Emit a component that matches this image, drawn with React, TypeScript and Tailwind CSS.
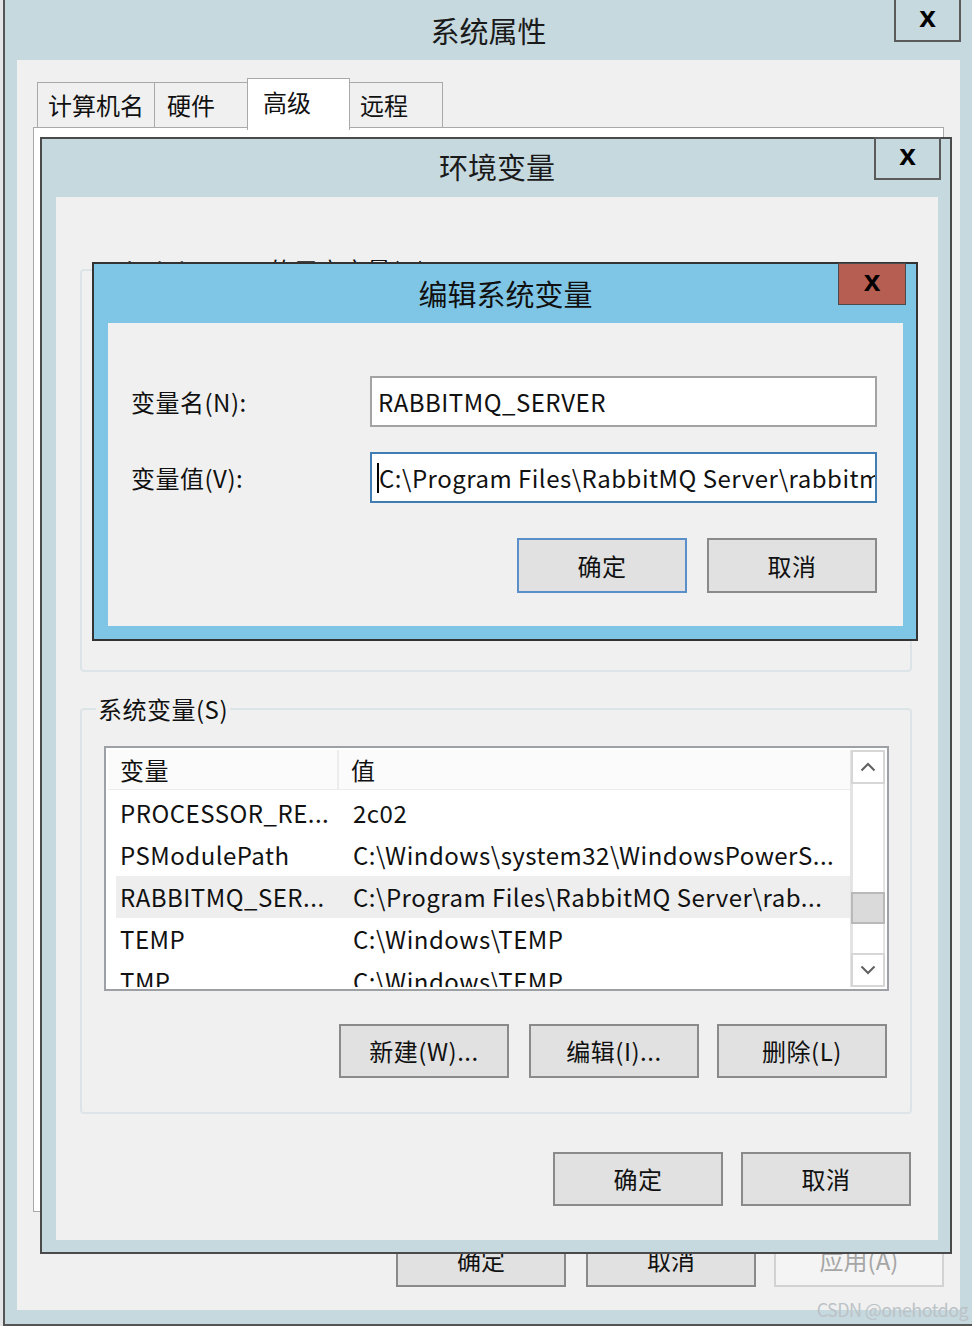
import clsx from "clsx";

const rows = [
  { name: "PROCESSOR_RE...", value: "2c02" },
  { name: "PSModulePath", value: "C:\\Windows\\system32\\WindowsPowerS..." },
  { name: "RABBITMQ_SER...", value: "C:\\Program Files\\RabbitMQ Server\\rab...", selected: true },
  { name: "TEMP", value: "C:\\Windows\\TEMP" },
  { name: "TMP", value: "C:\\Windows\\TEMP" },
];

function CloseX({ className }: { className: string }) {
  return (
    <div
      className={clsx(
        "absolute flex items-center justify-center font-['Liberation_Sans',sans-serif] text-[30px] font-bold leading-none tracking-normal text-black",
        className,
      )}
    >
      <span className="-mt-[7px]">x</span>
    </div>
  );
}

function Btn({
  label,
  primary,
  disabled,
  className,
}: {
  label: string;
  primary?: boolean;
  disabled?: boolean;
  className?: string;
}) {
  return (
    <div
      className={clsx(
        "flex w-[170px] shrink-0 items-center justify-center border-2 text-[24px] leading-none",
        primary && "border-[#5b8fc9] bg-[#e1e1e1]",
        disabled && "border-[#d2d2d2] bg-[#f4f4f4] text-[#a6a6a6]",
        !primary && !disabled && "border-[#8a8a8a] bg-[#e1e1e1]",
        className,
      )}
    >
      {label}
    </div>
  );
}

function SystemProperties() {
  return (
    <div className="absolute left-[3px] top-[-2px] flex h-[1328px] w-[974px] flex-col border-2 border-[#555] bg-[#c6d9df] pb-[14px] pl-[12px] pr-[15px]">
      <div className="flex h-[60px] shrink-0 items-center justify-center text-[29px] leading-none text-[#1a1a1a]">
        系统属性
      </div>
      <CloseX className="right-[14px] top-[-2px] h-[44px] w-[67px] border-2 border-[#5a5a5a]" />

      <div className="flex flex-1 flex-col bg-[#f0f0f0] pl-[16px] pr-[16px] pt-[18px]">
        <div className="relative z-10 flex h-[49px] items-start pl-[4px] text-[24px] leading-none">
          <div className="mt-[4px] flex h-[45px] w-[118px] items-center border border-b-0 border-[#a9a9a9] bg-[#f0f0f0] pl-[10px]">
            计算机名
          </div>
          <div className="-ml-px mt-[4px] flex h-[45px] w-[94px] items-center border border-b-0 border-[#a9a9a9] bg-[#f0f0f0] pl-[12px]">
            硬件
          </div>
          <div className="-ml-px flex h-[52px] w-[103px] items-start border border-b-0 border-[#a9a9a9] bg-white pl-[15px] pt-[11px]">
            高级
          </div>
          <div className="-ml-px mt-[4px] flex h-[45px] w-[94px] items-center border border-b-0 border-[#a9a9a9] bg-[#f0f0f0] pl-[10px]">
            远程
          </div>
        </div>
        <div className="h-[1085px] border border-[#a9a9a9] bg-white" />
        <div className="mt-[20px] flex justify-end">
          <Btn label="确定" className="h-[55px]" />
          <Btn label="取消" className="ml-[20px] h-[55px]" />
          <Btn label="应用(A)" disabled className="ml-[18px] h-[55px]" />
        </div>
      </div>
    </div>
  );
}

function ScrollBar() {
  return (
    <div className="flex w-[35px] flex-col border-l border-[#e3e3e3] bg-white">
      <div className="flex h-[34px] items-center justify-center border-2 border-[#d6d6d6]">
        <svg width="16" height="10" viewBox="0 0 16 10">
          <polyline points="1.5,8.5 8,2 14.5,8.5" fill="none" stroke="#606060" strokeWidth="2" />
        </svg>
      </div>
      <div className="flex flex-1 flex-col border-x-2 border-[#e4e4e4]">
        <div className="-mx-[2px] mt-[108px] h-[32px] border-2 border-[#b9b9b9] bg-[#dadada]" />
      </div>
      <div className="flex h-[34px] items-center justify-center border-2 border-[#d6d6d6]">
        <svg width="16" height="10" viewBox="0 0 16 10">
          <polyline points="1.5,1.5 8,8 14.5,1.5" fill="none" stroke="#606060" strokeWidth="2" />
        </svg>
      </div>
    </div>
  );
}

function EnvWindow() {
  return (
    <div className="absolute left-[40px] top-[137px] flex h-[1117px] w-[912px] flex-col border-2 border-[#4a4a4a] bg-[#c6d9df] pb-[12px] pl-[14px] pr-[12px]">
      <div className="flex h-[58px] shrink-0 items-center justify-center pb-[4px] text-[29px] leading-none text-[#1a1a1a]">
        环境变量
      </div>
      <CloseX className="right-[9px] top-[-2px] h-[43px] w-[67px] border-2 border-[#5a5a5a]" />

      <div className="flex-1 bg-[#f0f0f0] pl-[24px] pr-[26px] pt-[57px] text-[24px] tracking-[0.5px]">
        <fieldset className="h-[418px] rounded-[4px] border-2 border-[#dde4e8]">
          <legend className="ml-[19px] px-[2px] leading-[32px]">Administrator 的用户变量(U)</legend>
        </fieldset>

        <fieldset className="mt-[21px] h-[421px] rounded-[4px] border-2 border-[#dde4e8]">
          <legend className="ml-[14px] px-[2px] leading-[32px]">系统变量(S)</legend>
          <div className="ml-[22px] mr-[21px] mt-[21px] flex h-[245px] border-2 border-[#9da1a6] bg-white p-[2px]">
            <div className="flex flex-1 flex-col overflow-hidden">
              <div className="mb-[2px] flex h-[40px] shrink-0 leading-none">
                <div className="flex w-[231px] items-center border-b border-r-2 border-[#ececec] bg-[#fbfbfb] pl-[12px]">
                  变量
                </div>
                <div className="flex flex-1 items-center border-b border-[#ececec] bg-[#fbfbfb] pl-[12px]">值</div>
              </div>
              {rows.map((r) => (
                <div
                  key={r.name}
                  className={clsx(
                    "ml-[8px] flex h-[42px] shrink-0 items-center whitespace-nowrap leading-none",
                    r.selected && "bg-[#eeeeee]",
                  )}
                >
                  <div className="w-[223px] pl-[4px]">{r.name}</div>
                  <div className="pl-[14px]">{r.value}</div>
                </div>
              ))}
            </div>
            <ScrollBar />
          </div>
          <div className="mr-[23px] mt-[33px] flex justify-end">
            <Btn label="新建(W)..." className="h-[54px]" />
            <Btn label="编辑(I)..." className="ml-[20px] h-[54px]" />
            <Btn label="删除(L)" className="ml-[18px] h-[54px]" />
          </div>
        </fieldset>

        <div className="mr-[1px] mt-[38px] flex justify-end">
          <Btn label="确定" className="h-[54px]" />
          <Btn label="取消" className="ml-[18px] h-[54px]" />
        </div>
      </div>
    </div>
  );
}

function EditDialog() {
  return (
    <div className="absolute left-[92px] top-[262px] flex h-[379px] w-[826px] flex-col border-2 border-[#333] bg-[#7fc6e6] pb-[13px] pl-[14px] pr-[13px]">
      <div className="flex h-[59px] shrink-0 items-center justify-center text-[29px] leading-none text-[#111]">
        编辑系统变量
      </div>
      <CloseX className="right-[10px] top-[-1px] h-[42px] w-[68px] border border-[#4a4a4a] bg-[#b65e52]" />

      <div className="flex flex-1 flex-col bg-[#f0f0f0] pl-[23px] pr-[26px] pt-[53px] text-[24px] leading-none tracking-[0.5px]">
        <div className="flex h-[51px] items-center">
          <div className="w-[239px]">变量名(N):</div>
          <div className="flex h-[51px] flex-1 items-center border-2 border-[#a3a3a3] bg-white pl-[6px]">
            RABBITMQ_SERVER
          </div>
        </div>
        <div className="mt-[25px] flex h-[51px] items-center">
          <div className="w-[239px]">变量值(V):</div>
          <div className="flex h-[51px] flex-1 items-center overflow-hidden whitespace-nowrap border-2 border-[#3f7db2] bg-white pl-[5px]">
            <span className="inline-block h-[30px] w-[2px] shrink-0 bg-black" />
            <span>C:\Program Files\RabbitMQ Server\rabbitmq_server-3.7.4</span>
          </div>
        </div>
        <div className="mt-[35px] flex justify-end">
          <Btn label="确定" primary className="h-[55px]" />
          <Btn label="取消" className="ml-[20px] h-[55px]" />
        </div>
      </div>
    </div>
  );
}

export default function App() {
  return (
    <div className="relative h-[1326px] w-[972px] overflow-hidden bg-[#e4e6e8] font-['Noto_Sans_CJK_SC','Noto_Sans',sans-serif] text-[#111]">
      <SystemProperties />
      <EnvWindow />
      <EditDialog />
      <div className="absolute bottom-[8px] right-[4px] text-[18px] leading-none tracking-[-0.6px] text-[#bcc3c7]">
        CSDN @onehotdog
      </div>
    </div>
  );
}
